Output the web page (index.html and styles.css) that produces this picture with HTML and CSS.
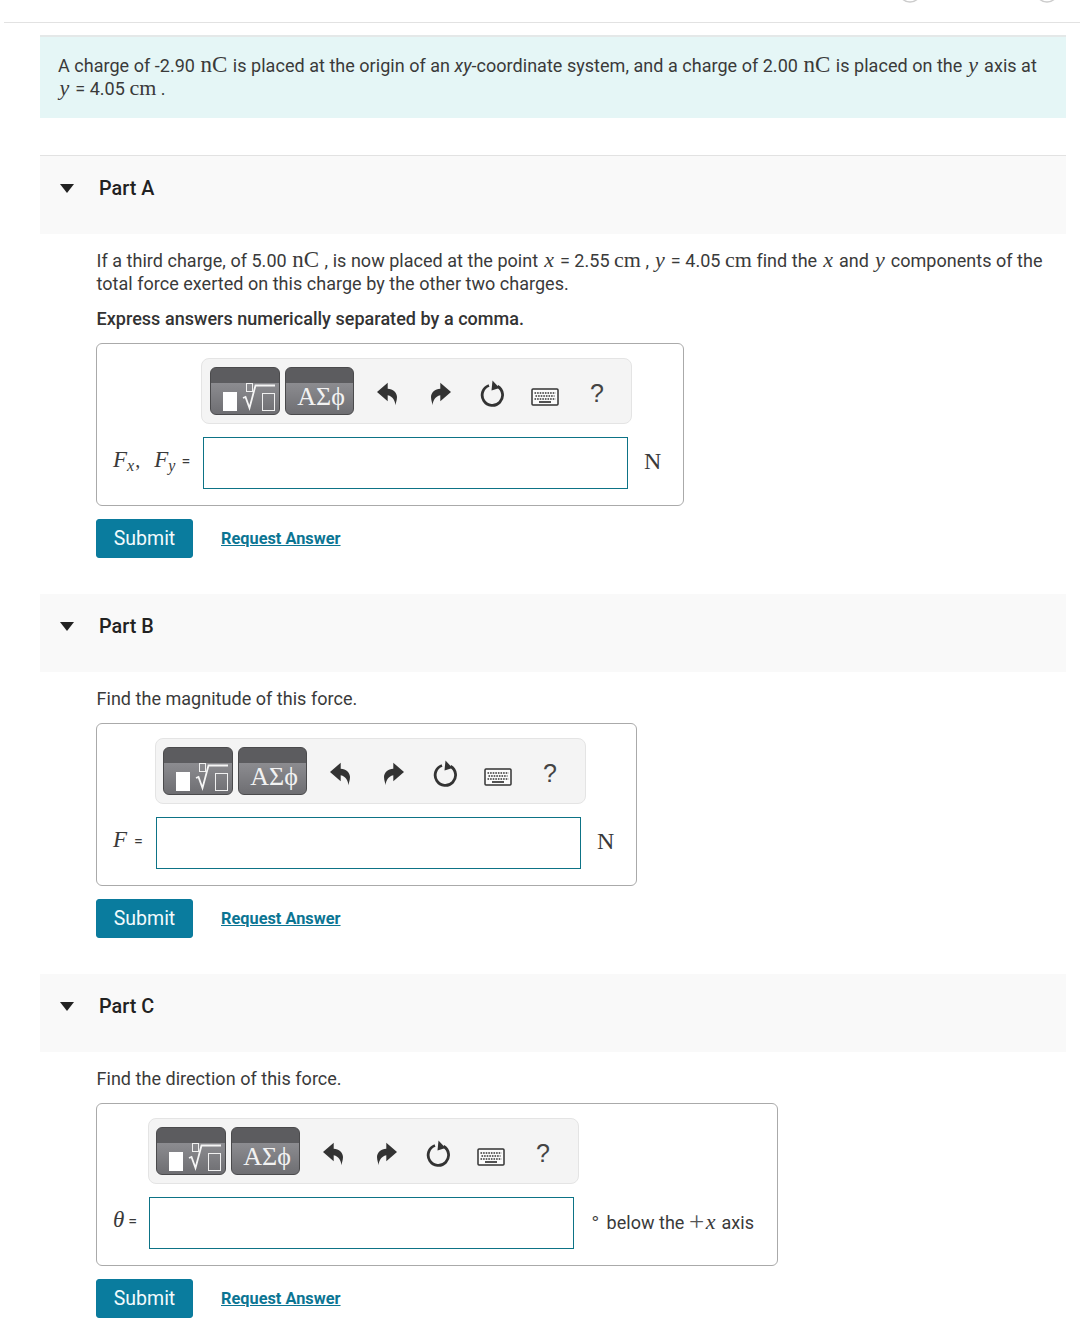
FILE: index.html
```html
<!DOCTYPE html>
<html lang="en">
<head>
<meta charset="utf-8">
<title>Charges</title>
<link rel="stylesheet" href="styles.css">
</head>
<body>
<svg width="0" height="0" class="defs">
  <defs>
    <symbol id="i-templates" viewBox="0 0 70 48">
      <rect x="13" y="25" width="14" height="19" fill="#fff"/>
      <rect x="36.5" y="16.5" width="6" height="8" fill="none" stroke="#f0f0f0"/>
      <path d="M33 31l2.500-1 4 11L45.500 18.500H65" fill="none" stroke="#f5f5f5" stroke-width="1.800"/>
      <rect x="52.500" y="26.500" width="12" height="17" fill="none" stroke="#f0f0f0"/>
    </symbol>
    <symbol id="i-undo" viewBox="0 0 20 24">
      <path d="M0 10L10.700.7v6C16 7 20 10.500 20 15c0 3.500-1.500 6.500-1.500 8.300-.5-4.300-2.500-9-7.800-10v6z" fill="#333"/>
    </symbol>
    <symbol id="i-redo" viewBox="0 0 20 24">
      <path d="M20 10L9.300.7v6C4 7 0 10.500 0 15c0 3.500 1.500 6.500 1.500 8.300.5-4.300 2.500-9 7.800-10v6z" fill="#333"/>
    </symbol>
    <symbol id="i-reset" viewBox="0 0 26 28">
      <path d="M9 5.500A10.200 10.200 0 1 0 17.500 6.300" fill="none" stroke="#333" stroke-width="2.800"/>
      <path d="M12.500.5l7 7.500-8 2.500z" fill="#333"/>
    </symbol>
    <symbol id="i-keys" viewBox="0 0 28 18">
      <rect x="1" y="1" width="26" height="16" rx="1" fill="#fbfbfb" stroke="#333" stroke-width="1.500"/>
      <path d="M3.500 5h21M4.500 8h19M3.500 11h21" stroke="#333" stroke-width="1.700" stroke-dasharray="1.600 1"/>
      <path d="M8 14h12" stroke="#333" stroke-width="1.700"/>
    </symbol>
  </defs>
</svg>

<header class="topbar">
  <svg class="top-arcs" width="1076" height="6" viewBox="0 0 1076 6">
    <circle cx="906" cy="-9" r="11" fill="none" stroke="#ccc" stroke-width="1.500"/>
    <circle cx="1043" cy="-9" r="11" fill="none" stroke="#ccc" stroke-width="1.500"/>
  </svg>
</header>

<main class="main">
  <div class="intro">
    A charge of -2.90 <span class="m nc">nC</span> is placed at the origin of an <i>xy</i>-coordinate system, and a charge of 2.00 <span class="m nc">nC</span> is placed on the <span class="v">y</span> axis at <span class="v">y</span> = 4.05 <span class="m">cm</span> .
  </div>

  <section class="part part-first">
    <div class="part-head"><span class="caret"></span><h2>Part A</h2></div>
    <div class="part-body">
      <p class="txt">If a third charge, of 5.00 <span class="m nc">nC</span> , is now placed at the point <span class="v">x</span> = 2.55 <span class="m">cm</span> , <span class="v">y</span> = 4.05 <span class="m">cm</span> find the <span class="v">x</span> and <span class="v">y</span> components of the total force exerted on this charge by the other two charges.</p>
      <p class="txt strong">Express answers numerically separated by a comma.</p>
      <div class="answer">
        <div class="toolbar">
          <span class="tbtn tbtn-a"><svg width="70" height="48"><use href="#i-templates"/></svg></span>
          <span class="tbtn tbtn-b">ΑΣϕ</span>
          <svg class="ic ic-undo" width="20" height="24"><use href="#i-undo"/></svg>
          <svg class="ic ic-redo" width="20" height="24"><use href="#i-redo"/></svg>
          <svg class="ic ic-reset" width="26" height="28"><use href="#i-reset"/></svg>
          <svg class="ic ic-keys" width="28" height="18"><use href="#i-keys"/></svg>
          <span class="help">?</span>
        </div>
        <label class="lbl lbl-a"><span class="v big fv">F<sub>x</sub></span><span class="cm">,</span> <span class="v big fv">F<sub>y</sub></span> <span class="eq">=</span></label>
        <div class="field"></div>
        <span class="unit m">N</span>
      </div>
      <div class="actions"><button class="submit">Submit</button><a class="req" href="#">Request Answer</a></div>
    </div>
  </section>

  <section class="part">
    <div class="part-head"><span class="caret"></span><h2>Part B</h2></div>
    <div class="part-body">
      <p class="txt">Find the magnitude of this force.</p>
      <div class="answer answer-narrow">
        <div class="toolbar">
          <span class="tbtn tbtn-a"><svg width="70" height="48"><use href="#i-templates"/></svg></span>
          <span class="tbtn tbtn-b">ΑΣϕ</span>
          <svg class="ic ic-undo" width="20" height="24"><use href="#i-undo"/></svg>
          <svg class="ic ic-redo" width="20" height="24"><use href="#i-redo"/></svg>
          <svg class="ic ic-reset" width="26" height="28"><use href="#i-reset"/></svg>
          <svg class="ic ic-keys" width="28" height="18"><use href="#i-keys"/></svg>
          <span class="help">?</span>
        </div>
        <label class="lbl lbl-b"><span class="v big">F</span> <span class="eq">=</span></label>
        <div class="field"></div>
        <span class="unit m">N</span>
      </div>
      <div class="actions"><button class="submit">Submit</button><a class="req" href="#">Request Answer</a></div>
    </div>
  </section>

  <section class="part">
    <div class="part-head"><span class="caret"></span><h2>Part C</h2></div>
    <div class="part-body">
      <p class="txt">Find the direction of this force.</p>
      <div class="answer answer-narrow">
        <div class="toolbar">
          <span class="tbtn tbtn-a"><svg width="70" height="48"><use href="#i-templates"/></svg></span>
          <span class="tbtn tbtn-b">ΑΣϕ</span>
          <svg class="ic ic-undo" width="20" height="24"><use href="#i-undo"/></svg>
          <svg class="ic ic-redo" width="20" height="24"><use href="#i-redo"/></svg>
          <svg class="ic ic-reset" width="26" height="28"><use href="#i-reset"/></svg>
          <svg class="ic ic-keys" width="28" height="18"><use href="#i-keys"/></svg>
          <span class="help">?</span>
        </div>
        <label class="lbl lbl-c"><span class="v big">θ</span> <span class="eq">=</span></label>
        <div class="field"></div>
        <span class="unit unit-text"><span class="deg">∘</span> below the <span class="m plus">+</span><span class="v">x</span> axis</span>
      </div>
      <div class="actions"><button class="submit">Submit</button><a class="req" href="#">Request Answer</a></div>
    </div>
  </section>
</main>
</body>
</html>
```

FILE: styles.css
```css
* { box-sizing: border-box; }
html, body { margin: 0; padding: 0; background: #fff; }
body {
  font-family: Roboto, "Liberation Sans", sans-serif;
  font-size: 18px;
  line-height: 23px;
  letter-spacing: .03px;
  color: #3a3a3a;
}
.defs { position: absolute; }

.topbar {
  position: relative;
  height: 23px;
  margin-left: 4px;
  border-bottom: 1px solid #e2e2e2;
}
.top-arcs { position: absolute; left: 0; top: 0; }

.main { margin-left: 40px; width: 1026px; padding-top: 12px; padding-bottom: 10px; }

.intro {
  background: #e5f6f6;
  border-top: 2px solid #e4e8e8;
  padding: 17px 18px 18px;
  height: 83px;
}
.m { font-family: "Liberation Serif", serif; font-size: 22px; line-height: 0; }
.nc { font-size: 23px; margin: 0 1px; }
.v { font-family: "Liberation Serif", serif; font-style: italic; font-size: 22px; line-height: 0; margin: 0 1.500px; }

.part { margin-top: 36px; }
.part-first { margin-top: 37px; }
.part-head {
  display: flex;
  align-items: flex-start;
  height: 78px;
  padding: 21px 0 0 20px;
  background: #f9f9f9;
}
.part-first .part-head { height: 79px; border-top: 1px solid #e2e2e2; }
.caret {
  width: 0;
  height: 0;
  margin-top: 7px;
  border-left: 7.500px solid transparent;
  border-right: 7.500px solid transparent;
  border-top: 9px solid #222;
}
h2 {
  margin: 0 0 0 25px;
  font-size: 19.800px;
  line-height: 23px;
  font-weight: 500;
  color: #222;
}

.part-body { padding: 15px 0 0 56px; }
.txt { margin: 0 0 13px; padding-left: .5px; }
.txt + .txt { margin-top: -1px; }
.strong { font-weight: 500; color: #333; }

.answer {
  display: inline-grid;
  grid-template-columns: auto 425px auto;
  column-gap: 13px;
  row-gap: 13px;
  align-items: center;
  padding: 14px 22px 16px 16px;
  border: 1px solid #aaa;
  border-radius: 6px;
  vertical-align: top;
}
.toolbar {
  grid-column: 2 / 4;
  grid-row: 1;
  justify-self: start;
  display: flex;
  align-items: center;
  width: 431px;
  height: 66px;
  margin-left: -2px;
  padding-left: 8px;
  background: #f4f4f4;
  border: 1px solid #e4e4e4;
  border-radius: 8px;
}
.answer-narrow .toolbar { margin-left: -1px; padding-left: 7px; }
.tbtn {
  display: block;
  height: 48px;
  margin-top: -1px;
  border: 1px solid #4a4a4c;
  border-radius: 6px;
  background: linear-gradient(#5c5c5f 0 15px, #8c8c90 15px, #6e6e72 100%);
  overflow: hidden;
}
.tbtn svg { display: block; margin: -1px; }
.tbtn-a { width: 70px; }
.tbtn-b {
  width: 69px;
  margin-left: 5px;
  padding: 14px 0 0 3px;
  text-align: center;
  font-family: "Liberation Serif", serif;
  font-size: 26px;
  line-height: 30px;
  color: #f2f2f2;
}
.ic { display: block; flex: none; }
.ic-undo { margin-left: 23px; margin-top: 6px; }
.ic-redo { margin-left: 34px; margin-top: 6px; }
.ic-reset { margin-left: 29px; margin-top: 5px; }
.ic-keys { margin-left: 25px; margin-top: 12px; }
.help {
  margin-left: 31px;
  margin-top: 4px;
  font-family: "Liberation Sans", sans-serif;
  font-size: 25px;
  color: #444;
}

.lbl { grid-column: 1; grid-row: 2; white-space: nowrap; font-size: 16px; margin-bottom: 4px; }
.lbl-a { width: 77px; }
.lbl-b { width: 30px; }
.lbl-c { width: 23px; }
.big { font-size: 23px; margin: 0; }
.fv { margin-right: 1px; }
.big sub { font-size: 16px; line-height: 0; vertical-align: -4px; }
.cm { font-family: "Liberation Serif", serif; font-size: 20px; margin-right: 10px; }
.eq { font-size: 16px; margin-left: 1px; }
.lbl-b .eq { margin-left: 3px; }
.lbl-c .eq { margin-left: 0; }
.field {
  grid-column: 2;
  grid-row: 2;
  height: 52px;
  border: 1px solid #0d7386;
  background: #fff;
}
.unit { grid-column: 3; grid-row: 2; margin-left: 3px; margin-bottom: 4px; white-space: nowrap; font-size: 24px; line-height: 23px; }
.unit-text { font-size: 18px; margin-right: 1px; margin-bottom: 6px; }
.deg { font-size: 17px; vertical-align: 6px; margin-right: 1px; }
.plus { font-size: 27px; color: #555; vertical-align: -2px; }

.actions { display: flex; align-items: center; margin-top: 13px; }
.submit {
  width: 97px;
  height: 39px;
  padding: 0;
  border: 1px solid #0a7a9c;
  border-radius: 3px;
  background: #0a7c9e;
  color: #f2fafc;
  font-family: Roboto, sans-serif;
  font-size: 19.500px;
}
.req {
  margin-left: 28px;
  color: #0b7593;
  font-size: 16.300px;
  font-weight: 700;
  text-decoration: underline;
}
```
